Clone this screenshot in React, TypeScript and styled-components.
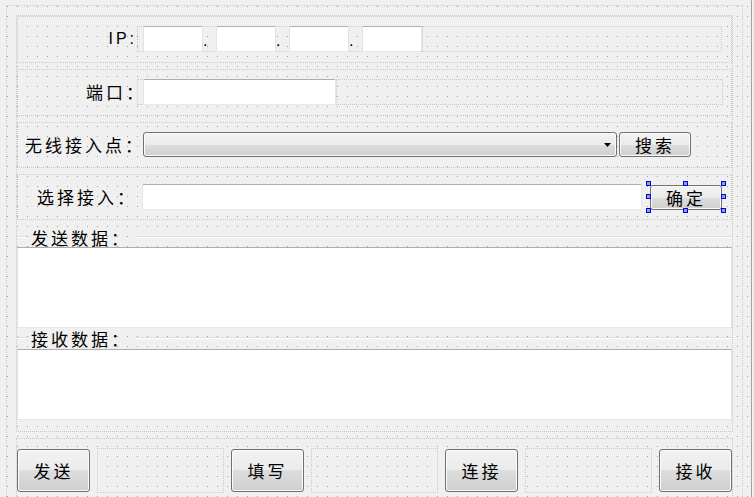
import { Fragment } from "react"
import styled, { createGlobalStyle } from "styled-components"

const GlobalStyle = createGlobalStyle`
  html, body {
    margin: 0;
    padding: 0;
    background: #f0f0f0;
  }
`

const cjk = `"Noto Sans CJK SC", "Noto Sans", sans-serif`
const dotColor = "#cacaca"

const Form = styled.div`
  width: 752px;
  height: 497px;
  box-sizing: border-box;
  padding-top: 5px;
  border-right: 1px solid #a0a0a0;
  overflow: hidden;
  background-color: #f0f0f0;
  background-image: linear-gradient(90deg, #f0f0f0 9px, transparent 9px),
    linear-gradient(180deg, #f0f0f0 9px, #a0a0a0 9px);
  background-size: 10px 10px;
  background-position: -2px -3px;
  font-family: ${cjk};
  color: #000;
`

const OuterLayout = styled.div`
  margin-left: 6px;
  width: 737px;
  height: 560px;
  box-sizing: border-box;
  padding: 9px;
  border: 1px dotted ${dotColor};
`

const FormBox = styled.div`
  height: 417px;
  box-sizing: border-box;
  border: 1px dotted ${dotColor};
  display: flex;
  flex-direction: column;
`

const Row = styled.div<{ $h: number; $gap?: number }>`
  height: ${(p) => p.$h}px;
  margin-top: ${(p) => p.$gap ?? 0}px;
  box-sizing: border-box;
  border: 1px dotted ${dotColor};
  padding-top: 9px;
  display: flex;
  align-items: flex-start;
`

const LabelCell = styled.div`
  width: 119px;
  height: 26px;
  display: flex;
  justify-content: flex-end;
  align-items: center;
  flex-shrink: 0;
`

const Label = styled.span<{ $over?: number; $latin?: boolean }>`
  font-family: ${(p) => (p.$latin ? `"Liberation Sans", sans-serif` : cjk)};
  font-size: ${(p) => (p.$latin ? 16 : 17)}px;
  line-height: 26px;
  letter-spacing: 3px;
  margin-right: ${(p) => -(p.$over ?? 0)}px;
  white-space: nowrap;
`

const FieldBox = styled.div<{ $w?: number; $frame?: boolean; $pad?: number }>`
  position: relative;
  display: flex;
  align-items: flex-start;
  height: 26px;
  padding-left: ${(p) => p.$pad ?? 6}px;
  ${(p) => (p.$w ? `width: ${p.$w}px; box-sizing: border-box;` : "flex: 1;")}
  &::before {
    content: "";
    display: ${(p) => (p.$frame ? "block" : "none")};
    position: absolute;
    inset: 0;
    border: 1px dotted ${dotColor};
    pointer-events: none;
  }
`

const LineEdit = styled.div<{ $w: number; $h?: number }>`
  position: relative;
  width: ${(p) => p.$w}px;
  height: ${(p) => p.$h ?? 26}px;
  box-sizing: border-box;
  flex-shrink: 0;
  background: #fff;
  border: 1px solid;
  border-color: #abadb3 #e2e3ea #e3e9ef #e2e3ea;
  border-radius: 2px;
`

const IpDot = styled.span`
  width: 13px;
  flex-shrink: 0;
  font-family: "Liberation Sans", sans-serif;
  font-size: 16px;
  line-height: 26px;
  padding-top: 2px;
`

const Spacer = styled.div`
  flex: 1;
  align-self: stretch;
  border-left: 1px dotted ${dotColor};
`

const buttonFace = `
  box-sizing: border-box;
  border: 1px solid #707070;
  border-radius: 3px;
  background: linear-gradient(180deg, #f2f2f2 0%, #ebebeb 50%, #dddddd 50%, #cfcfcf 100%);
  box-shadow: inset 0 0 0 1px #fbfbfb;
`

const PushButton = styled.div<{ $w: number; $h: number; $top?: number; $left?: number }>`
  ${buttonFace}
  width: ${(p) => p.$w}px;
  height: ${(p) => p.$h}px;
  margin-top: ${(p) => p.$top ?? 0}px;
  margin-left: ${(p) => p.$left ?? 0}px;
  flex-shrink: 0;
  display: flex;
  align-items: center;
  justify-content: center;
  font-size: 17px;
  letter-spacing: 3px;
  line-height: 1;
`

const Combo = styled.div<{ $w: number }>`
  ${buttonFace}
  width: ${(p) => p.$w}px;
  height: 25px;
  flex-shrink: 0;
  display: flex;
  align-items: center;
  justify-content: flex-end;
  padding-right: 5px;
`

const Selected = styled.div`
  position: relative;
  margin-left: 8px;
  margin-top: 1px;
`

const Handle = styled.span<{ $x: number; $y: number }>`
  position: absolute;
  left: ${(p) => p.$x}px;
  top: ${(p) => p.$y}px;
  width: 3px;
  height: 3px;
  background: #a0a0a0;
  border: 1px solid #0000ff;
`

const GroupTitle = styled.div<{ $gap: number }>`
  height: 18px;
  margin-top: ${(p) => p.$gap}px;
  display: flex;
  align-items: flex-start;
`

const FrameLine = styled.div<{ $grow?: boolean }>`
  ${(p) => (p.$grow ? "flex: 1;" : "width: 10px;")}
  height: 0;
  margin-top: 7px;
  border-top: 1px solid #d5dfe5;
  border-bottom: 1px solid #ffffff;
`

const GroupText = styled.span`
  margin: 0 4px;
  font-size: 17px;
  line-height: 17px;
  letter-spacing: 3px;
  white-space: nowrap;
`

const TextEdit = styled.div<{ $h: number; $gap?: number }>`
  height: ${(p) => p.$h}px;
  margin-top: ${(p) => p.$gap ?? 0}px;
  box-sizing: border-box;
  background: #fff;
  border: 1px solid;
  border-color: #abadb3 #dfe3e8 #e3e9ef #e2e3ea;
`

const BottomBar = styled.div`
  margin-top: 6px;
  height: 80px;
  box-sizing: border-box;
  border: 1px dotted ${dotColor};
  padding-top: 9px;
  display: flex;
  align-items: flex-start;
`

const HSpacer = styled.div`
  width: 127px;
  height: 45px;
  margin: 0 7px;
  box-sizing: border-box;
  border: 1px dotted ${dotColor};
`

const Arrow = () => (
  <svg width="7" height="4" viewBox="0 0 7 4">
    <polygon points="0,0 7,0 3.5,4" fill="#000" />
  </svg>
)

const handles = [
  [-4, -4],
  [33, -4],
  [71, -4],
  [-4, 9],
  [71, 9],
  [-4, 23],
  [33, 23],
  [71, 23],
]

export default function App() {
  const bottom = ["发送", "填写", "连接", "接收"]
  return (
    <>
      <GlobalStyle />
      <Form>
        <OuterLayout>
          <FormBox>
            <Row $h={47}>
              <LabelCell>
                <Label $latin>IP:</Label>
              </LabelCell>
              <FieldBox $w={585} $frame>
                <LineEdit $w={60} />
                <IpDot>.</IpDot>
                <LineEdit $w={60} />
                <IpDot>.</IpDot>
                <LineEdit $w={60} />
                <IpDot>.</IpDot>
                <LineEdit $w={60} />
                <Spacer />
              </FieldBox>
            </Row>
            <Row $h={47} $gap={6}>
              <LabelCell>
                <Label $over={9}>端口：</Label>
              </LabelCell>
              <FieldBox $w={586} $frame>
                <LineEdit $w={193} />
                <Spacer />
              </FieldBox>
            </Row>
            <Row $h={46} $gap={6}>
              <LabelCell>
                <Label $over={8}>无线接入点：</Label>
              </LabelCell>
              <FieldBox>
                <Combo $w={474}>
                  <Arrow />
                </Combo>
                <PushButton $w={72} $h={25} $left={2}>
                  搜索
                </PushButton>
              </FieldBox>
            </Row>
            <Row $h={46} $gap={6}>
              <LabelCell>
                <Label>选择接入：</Label>
              </LabelCell>
              <FieldBox $pad={5}>
                <LineEdit $w={500} />
                <Selected>
                  <PushButton $w={72} $h={25}>
                    确定
                  </PushButton>
                  {handles.map(([x, y]) => (
                    <Handle key={`${x}-${y}`} $x={x} $y={y} />
                  ))}
                </Selected>
              </FieldBox>
            </Row>

            <GroupTitle $gap={9}>
              <FrameLine />
              <GroupText>发送数据：</GroupText>
              <FrameLine $grow />
            </GroupTitle>
            <TextEdit $h={81} />
            <GroupTitle $gap={2}>
              <FrameLine />
              <GroupText>接收数据：</GroupText>
              <FrameLine $grow />
            </GroupTitle>
            <TextEdit $h={71} $gap={1} />
          </FormBox>

          <BottomBar>
            {bottom.map((label, i) => (
              <Fragment key={label}>
                {i > 0 && <HSpacer />}
                <PushButton $w={73} $h={43} $top={1}>
                  {label}
                </PushButton>
              </Fragment>
            ))}
          </BottomBar>
        </OuterLayout>
      </Form>
    </>
  )
}
